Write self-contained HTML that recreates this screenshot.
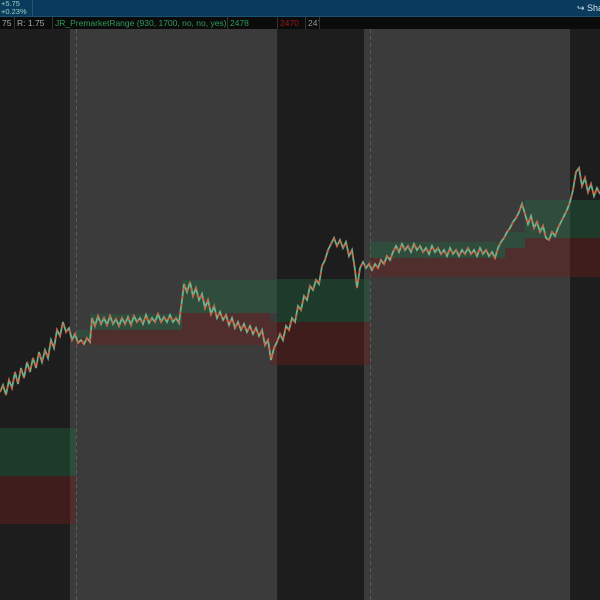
<!DOCTYPE html>
<html><head><style>
body{margin:0;width:600px;height:600px;overflow:hidden;background:#1d1d1d;font-family:"Liberation Sans",sans-serif}
#hdr{position:absolute;left:0;top:0;width:600px;height:16px;background:#0b3b5c;border-bottom:1px solid #1a5070}
#hdr .t{position:absolute;left:1px;top:0;font-size:7.5px;line-height:8px;color:#9fd0c0;white-space:nowrap}
#hdr .sep{position:absolute;left:32px;top:0;width:1px;height:16px;background:#1f5677}
#hdr .sh{position:absolute;left:577px;top:3px;font-size:9px;color:#d8e4ee;white-space:nowrap}
#bar{position:absolute;left:0;top:17px;width:600px;height:12px;background:#0b0b0b;font-size:8.5px;line-height:12px;color:#aaa;white-space:nowrap;overflow:hidden}
#bar span{position:absolute;top:0;height:12px;border-right:1px solid #333;padding-left:2px;box-sizing:border-box;white-space:nowrap;overflow:hidden}
</style></head><body>
<svg width="600" height="600" style="position:absolute;left:0;top:0">
<rect x="0" y="29" width="600" height="571" fill="#1d1d1d"/>
<rect x="70" y="29" width="207" height="571" fill="#3b3b3b"/>
<rect x="364" y="29" width="206" height="571" fill="#3b3b3b"/>
<line x1="76.5" y1="29" x2="76.5" y2="600" stroke="#5a5a5a" stroke-dasharray="4,3"/>
<line x1="370.5" y1="29" x2="370.5" y2="600" stroke="#5a5a5a" stroke-dasharray="4,3"/>
<g fill="#1f6a3f" fill-opacity="0.38">
<rect x="0" y="428" width="76" height="48"/>
<rect x="76" y="330" width="14" height="8"/>
<rect x="90" y="314" width="92" height="16"/>
<rect x="182" y="280" width="95" height="33"/>
<rect x="277" y="279" width="93" height="43"/>
<rect x="370" y="242" width="135" height="16"/>
<rect x="505" y="232" width="20" height="16"/>
<rect x="525" y="200" width="75" height="38"/>
</g>
<g fill="#6a1f1f" fill-opacity="0.45">
<rect x="0" y="476" width="76" height="48"/>
<rect x="76" y="338" width="14" height="7"/>
<rect x="90" y="330" width="92" height="15"/>
<rect x="182" y="313" width="88" height="32"/>
<rect x="270" y="322" width="100" height="43"/>
<rect x="370" y="258" width="135" height="19"/>
<rect x="505" y="248" width="20" height="29"/>
<rect x="525" y="238" width="75" height="39"/>
</g>
<defs><polyline id="pl" points="0,392 3,385 6,395 9,380 12,388 15,372 18,384 21,368 24,378 27,362 30,372 33,358 36,368 39,352 42,362 45,350 48,358 51,340 54,348 57,330 60,336 63,322 66,332 69,328 72,340 75,334 78,343 81,340 84,344 87,338 90,342 92,318 95,326 98,316 101,324 104,318 107,325 110,316 113,324 116,319 119,326 122,318 125,324 128,317 131,325 134,316 137,322 140,318 143,324 146,315 149,323 152,318 155,322 158,314 161,322 164,317 167,322 170,315 173,322 176,318 179,323 182,300 184,284 187,292 190,282 193,296 196,288 199,300 202,294 205,308 208,300 211,314 214,306 217,318 220,312 223,320 226,315 229,325 232,318 235,328 238,322 241,330 244,324 247,332 250,326 253,334 256,328 259,336 262,330 265,345 268,340 271,360 274,348 277,342 280,334 283,340 286,326 289,330 292,318 295,322 298,306 301,310 304,296 307,300 310,286 313,290 316,280 319,284 322,266 325,260 328,250 331,244 334,238 337,246 340,240 343,248 346,242 349,256 352,250 355,270 357,288 360,268 363,262 366,268 369,264 372,270 375,264 378,268 381,260 384,264 387,256 390,260 393,252 396,246 399,252 402,244 405,250 408,246 411,252 414,244 417,250 420,246 423,252 426,248 429,254 432,246 435,252 438,248 441,254 444,250 447,256 450,248 453,254 456,250 459,256 462,250 465,254 468,248 471,254 474,250 477,256 480,248 483,254 486,250 489,256 492,252 495,258 498,248 501,242 504,238 507,232 510,228 513,222 516,218 519,212 522,204 525,214 528,224 531,216 534,228 537,222 540,232 543,226 546,238 549,240 552,232 555,236 558,228 561,222 564,216 567,210 570,202 573,190 576,172 579,168 582,186 585,178 588,192 591,184 594,196 597,188 600,194" fill="none"/></defs>
<use href="#pl" stroke="#7fc79a" stroke-width="1.8" opacity="0.85"/>
<use href="#pl" stroke="#d9593a" stroke-width="1.8" stroke-dasharray="3,5" opacity="0.9"/>
</svg>
<div id="hdr"><div class="t">+5.75<br>+0.23%</div><div class="sep"></div><div class="sh">&#x21AA; Sha</div></div>
<div id="bar">
<span style="left:0;width:15px">75</span>
<span style="left:15px;width:38px">R: 1.75</span>
<span style="left:53px;width:175px;color:#2f9a56">JR_PremarketRange (930, 1700, no, no, yes)</span>
<span style="left:228px;width:50px;color:#2f9a56">2478</span>
<span style="left:278px;width:28px;color:#a01818">2470</span>
<span style="left:306px;width:14px;color:#999">2474</span>
</div>
</body></html>
